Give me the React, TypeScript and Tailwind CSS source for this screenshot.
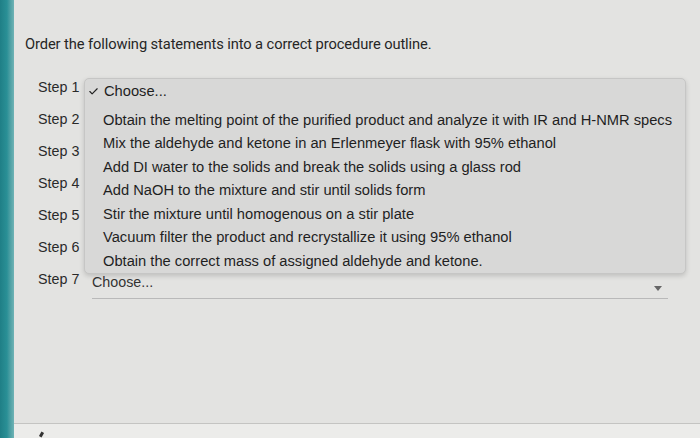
import { Check } from 'lucide-react'

const ITEMS = [
  'Obtain the melting point of the purified product and analyze it with IR and H-NMR specs',
  'Mix the aldehyde and ketone in an Erlenmeyer flask with 95% ethanol',
  'Add DI water to the solids and break the solids using a glass rod',
  'Add NaOH to the mixture and stir until solids form',
  'Stir the mixture until homogenous on a stir plate',
  'Vacuum filter the product and recrystallize it using 95% ethanol',
  'Obtain the correct mass of assigned aldehyde and ketone.',
]

const SANS = { fontFamily: '"Liberation Sans", Arial, sans-serif' }

export default function App() {
  return (
    <div className="flex w-[700px] h-[438px] overflow-hidden bg-[#e3e3e1]">
      {/* teal stripe of the window edge */}
      <div className="w-[14px] shrink-0 bg-gradient-to-r from-[#1f7f86] via-[#2a9096] to-[#6fb3b5]" />

      <div className="relative flex-1 flex flex-col">
        <p
          className="ml-[11px] mt-[35px] text-[14.7px] leading-[18px] text-[#262626] tracking-[-0.1px]"
          style={{ fontFamily: 'Roboto, "Liberation Sans", sans-serif' }}
        >
          Order the following statements into a correct procedure outline.
        </p>

        <div className="ml-[24px] mt-[19px] flex flex-col text-[14.3px] text-[#2a2a2a]" style={SANS}>
          {[1, 2, 3, 4, 5, 6].map(n => (
            <div key={n} className="h-[32px] flex items-center">Step {n}</div>
          ))}
          <div className="h-[32px] flex items-center">
            <span className="w-[54px] shrink-0">Step 7</span>
            <div className="relative flex-1 mr-[32px] h-[32px] flex items-center border-b border-[#b9b9b9] mt-[6px]">
              <span className="text-[#333]">Choose...</span>
              <span className="absolute right-[6px] top-[19px] w-0 h-0 border-l-[4px] border-r-[4px] border-t-[5px] border-l-transparent border-r-transparent border-t-[#666]" />
            </div>
          </div>
        </div>

        <div className="flex-1" />
        <div className="h-[15px] border-t border-[#c4c4c2] bg-[#ececea] relative">
          <span className="absolute left-[26px] top-[8px] w-[3px] h-[5px] bg-[#333] rotate-[30deg]" />
        </div>

        {/* open dropdown menu */}
        <div
          className="absolute left-[70px] top-[78px] w-[602px] h-[196px] rounded-[5px] bg-[#d8d8d7] border border-[#c6c6c5] shadow-[0_2px_5px_rgba(0,0,0,0.16)] text-[14.7px] text-[#1f1f1f]"
          style={SANS}
        >
          <div className="h-[24px] flex items-center pl-[3px]">
            <Check size={11} strokeWidth={2.5} className="text-[#222] mr-[5px]" />
            <span>Choose...</span>
          </div>
          <div className="mt-[5px]">
            {ITEMS.map(t => (
              <div key={t} className="h-[23.5px] flex items-center pl-[18px] whitespace-nowrap">{t}</div>
            ))}
          </div>
        </div>
      </div>
    </div>
  )
}
